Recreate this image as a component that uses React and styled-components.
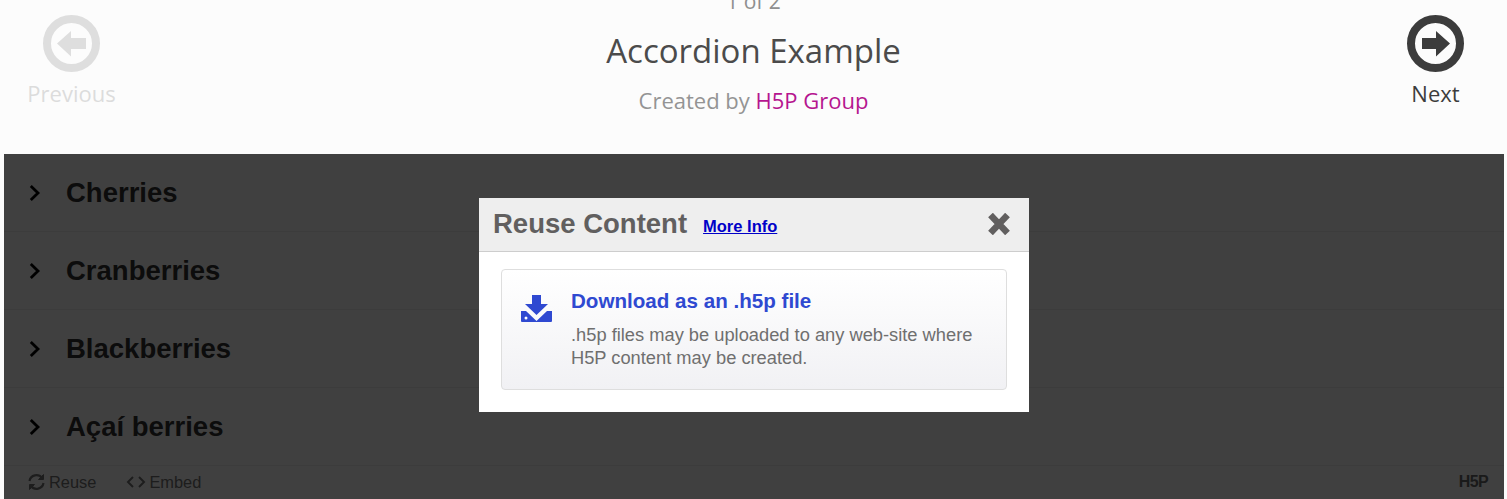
import styled, { createGlobalStyle } from "styled-components";

const GlobalStyle = createGlobalStyle`
  html, body {
    margin: 0;
    padding: 0;
    height: 499px;
    overflow: hidden;
    background: #fcfcfc;
  }
`;

const Page = styled.div`
  width: 1507px;
  height: 499px;
  overflow: hidden;
  display: flex;
  flex-direction: column;
  font-family: "Open Sans", sans-serif;
`;

const Header = styled.header`
  height: 154px;
  flex: none;
  overflow: hidden;
  display: grid;
  grid-template-columns: 143px 1fr 143px;
`;

const NavButton = styled.div`
  display: flex;
  flex-direction: column;
  align-items: center;
  padding-top: 15px;
  color: ${(p) => (p.$disabled ? "#dcdcdc" : "#3c3c3c")};
  font-size: 22px;
  line-height: 30px;
  svg {
    display: block;
    margin-bottom: 6px;
  }
`;

const Titles = styled.div`
  display: flex;
  flex-direction: column;
  align-items: center;
`;

const Counter = styled.div`
  color: #8f8f8f;
  font-size: 21px;
  line-height: 29px;
  margin-top: -13px;
`;

const Title = styled.h1`
  margin: 13px 0 0;
  color: #4b4b4b;
  font-size: 33px;
  font-weight: 400;
  line-height: 44px;
`;

const Byline = styled.div`
  margin-top: 13px;
  color: #949494;
  font-size: 22px;
  line-height: 29px;
  a {
    color: #b5158f;
    text-decoration: none;
  }
`;

const Content = styled.main`
  position: relative;
  flex: 1;
  margin: 0 3px 0 4px;
  background: #fff;
  font-family: "Liberation Sans", Arial, sans-serif;
`;

const Row = styled.div`
  height: 77px;
  box-sizing: content-box;
  border-bottom: 1px solid #f0f0f0;
  display: flex;
  align-items: center;
  gap: 25px;
  padding-left: 25px;
  color: #333;
  font-size: 27.5px;
  font-weight: 700;
  svg {
    flex: none;
  }
`;

const Footer = styled.footer`
  height: 32px;
  display: flex;
  align-items: center;
  padding: 0 16px 2px 23px;
  color: #747474;
  font-size: 16.4px;
`;

const FooterItem = styled.span`
  display: flex;
  align-items: center;
  gap: 3px;
  margin-right: 30px;
`;

const FooterLogo = styled.span`
  margin-left: auto;
  color: #6a6a6a;
  font-size: 16px;
  font-weight: 700;
  letter-spacing: -0.6px;
`;

const Overlay = styled.div`
  position: absolute;
  inset: 0;
  background: rgba(0, 0, 0, 0.75);
`;

const Dialog = styled.section`
  position: absolute;
  left: 475px;
  top: 44px;
  width: 550px;
  height: 214px;
  background: #fff;
`;

const DialogHead = styled.div`
  height: 54px;
  box-sizing: border-box;
  background: #eeeeee;
  border-bottom: 1px solid #cdcdcd;
  display: flex;
  align-items: center;
  padding: 0 18px 2px 14px;
`;

const DialogTitle = styled.h2`
  margin: 0;
  color: #615f5f;
  font-size: 27.5px;
  font-weight: 700;
`;

const MoreInfo = styled.a`
  margin: 6px 0 0 16px;
  color: #0000c8;
  font-size: 16.5px;
  font-weight: 700;
  text-decoration: underline;
`;

const CloseIcon = styled.svg`
  margin-left: auto;
`;

const DialogBody = styled.div`
  padding: 17px 22px;
`;

const Option = styled.div`
  height: 121px;
  box-sizing: border-box;
  display: flex;
  padding: 19px 19px;
  gap: 19px;
  border: 1px solid #dedede;
  border-radius: 4px;
  background: linear-gradient(#ffffff, #f1f1f4);
`;

const OptionText = styled.div`
  display: flex;
  flex-direction: column;
`;

const OptionTitle = styled.div`
  color: #2f49d1;
  font-size: 20.6px;
  font-weight: 700;
  line-height: 24px;
`;

const OptionDesc = styled.div`
  margin-top: 10px;
  color: #6f6f6f;
  font-size: 18.3px;
  line-height: 23px;
`;

const DownloadIcon = styled.svg`
  flex: none;
  margin-top: 6px;
`;

function ArrowCircle({ color, dir }) {
  return (
    <svg width="57" height="57" viewBox="0 0 57 57">
      <circle cx="28.5" cy="28.5" r="24.5" fill="none" stroke={color} strokeWidth="8" />
      <path
        d={
          dir === "left"
            ? "M14 28.5 L28 16 V23 H43 V34 H28 V41.5 Z"
            : "M43 28.5 L29 16 V23 H15 V34 H29 V41.5 Z"
        }
        fill={color}
      />
    </svg>
  );
}

function Chevron() {
  return (
    <svg width="12" height="18" viewBox="0 0 12 18">
      <path d="M1.8 2 L9 9 L1.8 16" fill="none" stroke="#000" strokeWidth="2.8" />
    </svg>
  );
}

const berries = ["Cherries", "Cranberries", "Blackberries", "Açaí berries"];

export default function App() {
  return (
    <Page>
      <GlobalStyle />
      <Header>
        <NavButton $disabled>
          <ArrowCircle color="#dedede" dir="left" />
          Previous
        </NavButton>
        <Titles>
          <Counter>1 of 2</Counter>
          <Title>Accordion Example</Title>
          <Byline>
            Created by <a href="#h5p">H5P Group</a>
          </Byline>
        </Titles>
        <NavButton>
          <ArrowCircle color="#3c3c3c" dir="right" />
          Next
        </NavButton>
      </Header>
      <Content>
        {berries.map((name) => (
          <Row key={name}>
            <Chevron />
            {name}
          </Row>
        ))}
        <Footer>
          <FooterItem>
            <svg width="19" height="18" viewBox="0 0 19 18" fill="none" stroke="#747474" strokeWidth="2.2">
              <path d="M2.5 8 A7 7 0 0 1 15 5" />
              <path d="M16.5 1.5 V6.5 H11.5 Z" fill="#747474" strokeWidth="1" />
              <path d="M16.5 10 A7 7 0 0 1 4 13" />
              <path d="M2.5 16.5 V11.5 H7.5 Z" fill="#747474" strokeWidth="1" />
            </svg>
            Reuse
          </FooterItem>
          <FooterItem>
            <svg width="20" height="12" viewBox="0 0 20 12" fill="none" stroke="#747474" strokeWidth="2">
              <path d="M7 1 L2 6 L7 11 M13 1 L18 6 L13 11" />
            </svg>
            Embed
          </FooterItem>
          <FooterLogo>H5P</FooterLogo>
        </Footer>
        <Overlay />
        <Dialog>
          <DialogHead>
            <DialogTitle>Reuse Content</DialogTitle>
            <MoreInfo href="#more">More Info</MoreInfo>
            <CloseIcon width="24" height="22" viewBox="0 0 24 22">
              <path d="M3.5 2 L20.5 20 M20.5 2 L3.5 20" stroke="#615f5f" strokeWidth="6.5" />
            </CloseIcon>
          </DialogHead>
          <DialogBody>
            <Option>
              <DownloadIcon width="31" height="28" viewBox="0 0 31 28">
                <path d="M11 0 H20 V9 H27 L15.5 20 L4 9 H11 Z" fill="#2f49d1" />
                <path
                  d="M0 16 H5 L15.5 26 L26 16 H31 V26 Q31 27 30 27 H1 Q0 27 0 26 Z"
                  fill="#2f49d1"
                />
                <circle cx="5" cy="23" r="1.5" fill="#fff" />
              </DownloadIcon>
              <OptionText>
                <OptionTitle>Download as an .h5p file</OptionTitle>
                <OptionDesc>
                  .h5p files may be uploaded to any web-site where
                  <br />
                  H5P content may be created.
                </OptionDesc>
              </OptionText>
            </Option>
          </DialogBody>
        </Dialog>
      </Content>
    </Page>
  );
}
